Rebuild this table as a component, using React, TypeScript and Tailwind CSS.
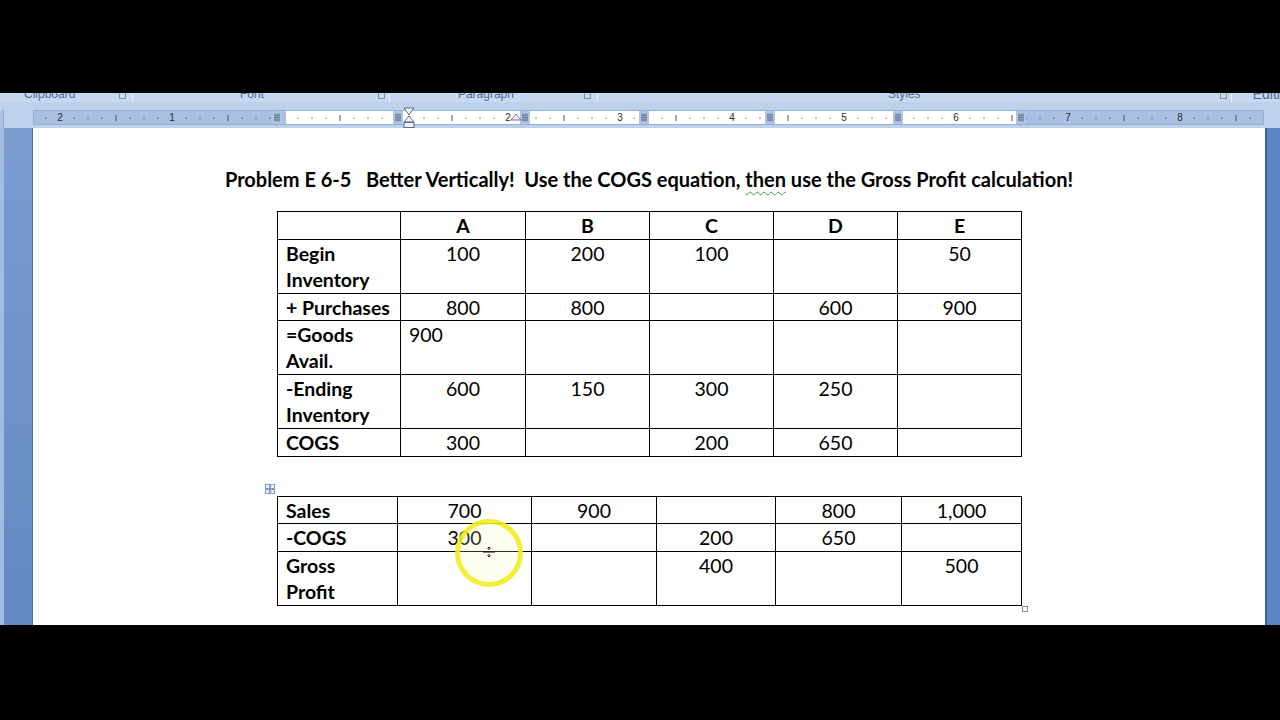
import React from 'react';

type Cell = { t?: string; b?: boolean; left?: boolean };

const TABLE_1: Cell[][] = [
  [{}, { t: 'A', b: true }, { t: 'B', b: true }, { t: 'C', b: true }, { t: 'D', b: true }, { t: 'E', b: true }],
  [{ t: 'Begin\nInventory', b: true, left: true }, { t: '100' }, { t: '200' }, { t: '100' }, {}, { t: '50' }],
  [{ t: '+ Purchases', b: true, left: true }, { t: '800' }, { t: '800' }, {}, { t: '600' }, { t: '900' }],
  [{ t: '=Goods\nAvail.', b: true, left: true }, { t: '900', left: true }, {}, {}, {}, {}],
  [{ t: '-Ending\nInventory', b: true, left: true }, { t: '600' }, { t: '150' }, { t: '300' }, { t: '250' }, {}],
  [{ t: 'COGS', b: true, left: true }, { t: '300' }, {}, { t: '200' }, { t: '650' }, {}],
];

const TABLE_2: Cell[][] = [
  [{ t: 'Sales', b: true, left: true }, { t: '700' }, { t: '900' }, {}, { t: '800' }, { t: '1,000' }],
  [{ t: '-COGS', b: true, left: true }, { t: '300' }, {}, { t: '200' }, { t: '650' }, {}],
  [{ t: 'Gross\nProfit', b: true, left: true }, {}, {}, { t: '400' }, {}, { t: '500' }],
];

// ruler coordinates are relative to x = 33 (page edge); zero of the scale sits at 251
const ZERO = 251;
const INCH = 112;
const MARKERS = [244, 365, 492, 611, 737, 865, 988];

function Ruler() {
  const ticks: React.ReactNode[] = [];
  for (let k = -17; k <= 78; k++) {
    const x = ZERO + (k * INCH) / 8;
    if (x < 4 || x > 1226) continue;
    if (k % 8 === 0) {
      if (k === 0) continue;
      ticks.push(
        <text key={k} x={x} y={11} fontSize={10} textAnchor="middle" fill="#2c2c2c" fontFamily="Liberation Sans, sans-serif">
          {Math.abs(k / 8)}
        </text>,
      );
    } else if (k % 4 === 0) {
      ticks.push(<rect key={k} x={x - 0.5} y={5} width={1} height={6} fill="#555" />);
    } else {
      ticks.push(<rect key={k} x={x - 0.5} y={7.5} width={1} height={1.5} fill="#666" />);
    }
  }
  return (
    <svg width={1231} height={15} viewBox="0 0 1231 15" className="block">
      <rect x={0} y={0} width={1231} height={15} fill="#a9c0e3" />
      <rect x={0.5} y={0.5} width={1230} height={14} fill="none" stroke="#97b0d7" />
      <rect x={253} y={1} width={735} height={13} fill="#ffffff" />
      {ticks}
      {MARKERS.map((m) => (
        <g key={m}>
          <rect x={m - 5} y={1} width={10} height={13} fill="#b1c6e6" />
          <path
            d={`M${m - 3} 5H${m + 3}M${m - 3} 7.5H${m + 3}M${m - 3} 10H${m + 3}M${m - 2} 3.5V11.5M${m} 3.5V11.5M${m + 2} 3.5V11.5`}
            stroke="#5d6f8c"
            strokeWidth={0.8}
          />
        </g>
      ))}
      {/* right indent */}
      <path d="M478 10L483 4L488 10H478Z" fill="#e9eef6" stroke="#4c5e7c" strokeWidth={0.8} />
    </svg>
  );
}

function Table({ data, cols, rows }: { data: Cell[][]; cols: string; rows: string }) {
  return (
    <div className={`grid border-l border-t border-black ${cols} ${rows}`}>
      {data.flatMap((row, r) =>
        row.map((c, i) => (
          <div
            key={`${r}-${i}`}
            className={`border-r border-b border-black pt-[1px] leading-[26px] whitespace-pre-line text-[19.5px] ${
              c.b ? 'font-bold' : 'font-normal'
            } ${c.left ? 'text-left pl-[8px]' : 'text-center'}`}
          >
            {c.t}
          </div>
        )),
      )}
    </div>
  );
}

export default function App() {
  return (
    <div className="w-[1280px] h-[720px] bg-black flex flex-col overflow-hidden font-['Lato','Open_Sans',sans-serif] text-black">
      <div className="h-[93px] bg-black" />

      {/* ribbon group labels, mostly covered by the black band */}
      <div className="h-[9px] bg-[#c8d9ef] flex overflow-hidden text-[12px] leading-[12px] text-[#4f6c98] font-['Liberation_Sans',sans-serif]">
        <div className="w-[133px] flex border-r border-[#e8f0fa] -mt-[5px]">
          <span className="pl-[24px]">Clipboard</span>
          <span className="ml-auto mr-[6px] mt-[4px] w-[7px] h-[7px] border border-[#7d95ba]" />
        </div>
        <div className="w-[257px] flex border-r border-[#e8f0fa] -mt-[5px]">
          <span className="pl-[107px]">Font</span>
          <span className="ml-auto mr-[4px] mt-[4px] w-[7px] h-[7px] border border-[#7d95ba]" />
        </div>
        <div className="w-[208px] flex border-r border-[#e8f0fa] -mt-[5px]">
          <span className="pl-[68px]">Paragraph</span>
          <span className="ml-auto mr-[6px] mt-[4px] w-[7px] h-[7px] border border-[#7d95ba]" />
        </div>
        <div className="w-[634px] flex border-r border-[#e8f0fa] -mt-[5px]">
          <span className="pl-[290px]">Styles</span>
          <span className="ml-auto mr-[4px] mt-[4px] w-[7px] h-[7px] border border-[#7d95ba]" />
        </div>
        <div className="flex-1 -mt-[5px] text-[14px]">
          <span className="pl-[21px]">Editi</span>
        </div>
      </div>

      {/* ruler band */}
      <div className="h-[26px] bg-[#bed1eb] flex">
        <div className="w-[33px] flex">
          <div className="w-[4px] mt-[8px] h-[18px] bg-[#aac2e5] border-r border-[#8fa9d2]" />
        </div>
        <div className="mt-[8px] relative">
          <Ruler />
          {/* first-line / hanging indent hourglass */}
          <svg width={12} height={22} viewBox="0 0 12 22" className="absolute left-[370px] -top-[3px]">
            <path d="M1 1H11L6 8Z" fill="#eef2f8" stroke="#4c5e7c" strokeWidth={0.9} />
            <path d="M6 9L11 15H1Z" fill="#eef2f8" stroke="#4c5e7c" strokeWidth={0.9} />
            <rect x={1} y={15.5} width={10} height={5} fill="#eef2f8" stroke="#4c5e7c" strokeWidth={0.9} />
          </svg>
        </div>
      </div>

      {/* document area */}
      <div className="h-[497px] flex">
        <div className="w-[33px] flex">
          <div className="w-[4px] bg-[#a2bde4]" />
          <div className="flex-1 bg-gradient-to-b from-[#7b9dd0] to-[#6388c2] border-r border-[#4f6f9f]" />
        </div>

        <div className="w-[1232px] bg-white relative">
          <div className="mt-[38px] h-[26px] leading-[26px] text-center text-[20px] font-bold whitespace-pre">
            {'Problem E 6-5   Better Vertically!  Use the COGS equation, '}
            <span className="underline decoration-wavy decoration-[#3c9a3c] decoration-1 underline-offset-[4px]">then</span>
            {' use the Gross Profit calculation!'}
          </div>

          <div className="mt-[19px] ml-[244px] w-fit">
            <Table
              data={TABLE_1}
              cols="grid-cols-[123px_125px_124px_124px_124px_124px]"
              rows="grid-rows-[28px_54px_27px_54px_54px_28px]"
            />
          </div>

          <div className="mt-[39px] ml-[244px] w-fit relative">
            <Table
              data={TABLE_2}
              cols="grid-cols-[120px_134px_125px_119px_126px_120px]"
              rows="grid-rows-[27px_28px_54px]"
            />
            {/* table move handle */}
            <div className="absolute -left-[12px] -top-[12px] w-[10px] h-[10px] bg-[#eef3fb] border border-[#7f9dc8] flex items-center justify-center">
              <svg width={8} height={8} viewBox="0 0 8 8">
                <path d="M4 0.5V7.5M0.5 4H7.5M3 1.5L4 0.5L5 1.5M3 6.5L4 7.5L5 6.5M1.5 3L0.5 4L1.5 5M6.5 3L7.5 4L6.5 5" stroke="#3d5f95" strokeWidth={0.9} fill="none" />
              </svg>
            </div>
            {/* table resize handle */}
            <div className="absolute -right-[6px] -bottom-[6px] w-[6px] h-[6px] bg-white border border-[#8a8a8a]" />
          </div>

          {/* presenter highlight circle and cursor */}
          <div className="absolute left-[422px] top-[391px] w-[68px] h-[68px] rounded-full border-[5px] border-[#f2ee22] opacity-90 bg-[#fbf9b0]/20" />
          <svg width={14} height={14} viewBox="0 0 14 14" className="absolute left-[449px] top-[417px]">
            <path d="M1 7H13M7 2V5M5.5 3.5L7 2L8.5 3.5M7 9V12M5.5 10.5L7 12L8.5 10.5" stroke="#111" strokeWidth={1} fill="none" />
          </svg>
        </div>

        <div className="flex-1 bg-[#5b86c5] border-l-2 border-[#3e5f92]" />
      </div>

      <div className="flex-1 bg-black" />
    </div>
  );
}
